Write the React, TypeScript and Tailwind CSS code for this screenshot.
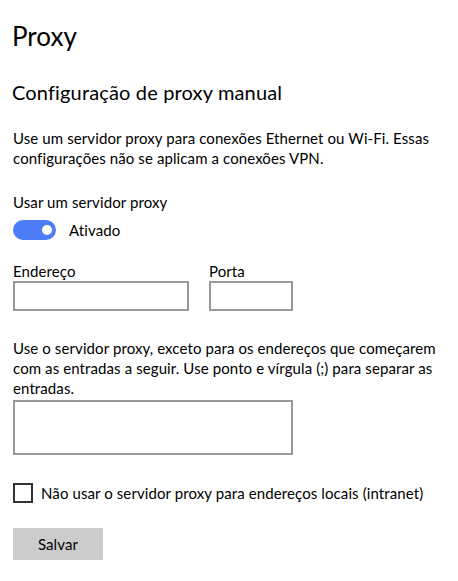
import React from "react";

export default function App() {
  return (
    <div
      className="w-[458px] h-[581px] bg-white text-black pl-[13px] overflow-hidden whitespace-nowrap"
      style={{ fontFamily: 'Lato, "Open Sans", sans-serif' }}
    >
      <h1 className="pt-[20px] text-[26px] leading-[32px] font-normal -ml-[1px]">Proxy</h1>
      <h2 className="mt-[26px] text-[20px] leading-[28px] font-normal tracking-[0.15px] -ml-[1px]">Configuração de proxy manual</h2>
      <div className="tracking-[0.1px]">
        <p className="mt-[22px] text-[15px] leading-[20px]">
          Use um servidor proxy para conexões Ethernet ou Wi-Fi. Essas
          <br />
          configurações não se aplicam a conexões VPN.
        </p>
        <div className="mt-[24px] text-[15px] leading-[20px]">Usar um servidor proxy</div>
        <div className="mt-[8px] flex items-center h-[20px]">
          <div className="w-[43px] h-[20px] rounded-full bg-[#4d7cf6] flex items-center justify-end pr-[4px]">
            <div className="w-[10px] h-[10px] rounded-full bg-white" />
          </div>
          <span className="ml-[13px] text-[15px] leading-[20px]">Ativado</span>
        </div>
        <div className="mt-[22px] flex gap-[20px]">
          <div className="flex flex-col">
            <span className="text-[15px] leading-[19px]">Endereço</span>
            <div className="w-[176px] h-[30px] border-2 border-[#999999]" />
          </div>
          <div className="flex flex-col">
            <span className="text-[15px] leading-[19px]">Porta</span>
            <div className="w-[84px] h-[30px] border-2 border-[#999999]" />
          </div>
        </div>
        <p className="mt-[27px] text-[15px] leading-[20px]">
          Use o servidor proxy, exceto para os endereços que começarem
          <br />
          com as entradas a seguir. Use ponto e vírgula (;) para separar as
          <br />
          entradas.
        </p>
        <div className="mt-[2px] w-[280px] h-[55px] border-2 border-[#999999]" />
        <label className="mt-[28px] flex items-center h-[20px]">
          <span className="w-[20px] h-[20px] border-2 border-[#333333]" />
          <span className="ml-[8px] text-[15px] leading-[20px]">Não usar o servidor proxy para endereços locais (intranet)</span>
        </label>
        <button className="mt-[25px] w-[90px] h-[32px] bg-[#cccccc] text-[15px] leading-[20px] block">Salvar</button>
      </div>
    </div>
  );
}
